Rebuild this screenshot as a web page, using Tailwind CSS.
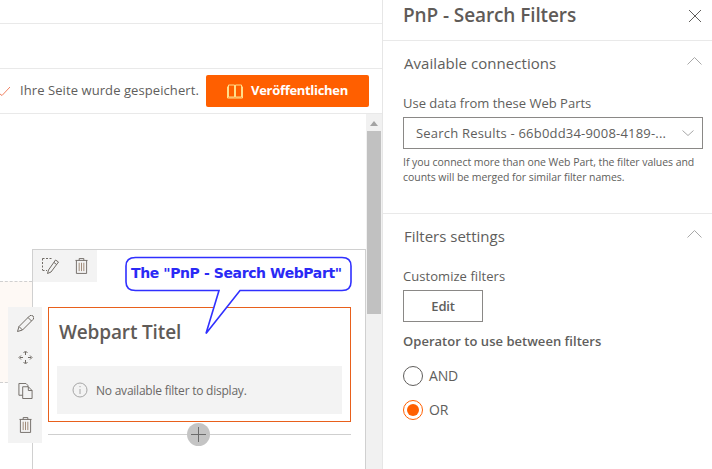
<!DOCTYPE html>
<html lang="en">
<head>
  <meta charset="UTF-8" />
  <title>PnP - Search Filters</title>
  <script src="https://cdn.jsdelivr.net/npm/@tailwindcss/browser@4"></script>
</head>
<body class="bg-white w-[712px] h-[469px] overflow-hidden font-['Open_Sans',sans-serif] text-[#605e5c]">
  <div class="flex h-[469px]">
    <!-- page editor -->
    <div class="relative w-[383px] h-[469px] border-r border-[#e6e6e6] flex flex-col">
      <div class="h-[24px] shrink-0 border-b border-[#e9e9e9]"></div>
      <div class="h-[45px] shrink-0 border-b border-[#e9e9e9]"></div>
      <div class="h-[45px] shrink-0 border-b border-[#e9e9e9] flex items-center pr-[13px]">
        <svg class="w-[10px] h-[10px] shrink-0" viewBox="0 0 10 10" fill="none" stroke="#f08060" stroke-width="1"><path d="M0 8 L2 9.5 L10 1"/></svg>
        <span class="ml-[10px] text-[13px] tracking-[0.08px] text-[#605e5c] whitespace-nowrap">Ihre Seite wurde gespeichert.</span>
        <button class="ml-auto w-[163px] h-[32px] rounded-[2px] bg-[#ff5f00] text-white flex items-center justify-center gap-[8px] text-[13px] font-bold tracking-[-0.3px]">
          <svg class="w-[16px] h-[15px]" viewBox="0 0 16 15" fill="none" stroke="#ffdf8a" stroke-width="1"><path d="M1.5 1 H7.5 V13 H1.5 Z M8.5 1 H14.5 V13 H8.5 Z M0.5 2.5 V14 H15.5 V2.5"/></svg>
          Veröffentlichen
        </button>
      </div>
      <div class="flex flex-1 min-h-0">
        <div class="w-[366px] pt-[135px]">
          <div class="relative h-[220px] flex">
            <div class="w-[32px] h-[102px] mt-[32px] bg-[#fef9f5] border-y border-dashed border-[#d0d0d0]"></div>
            <div class="w-[334px] h-[240px] border-l border-t border-r border-[#d0d0d0] pl-[15px] pr-[14px] pt-[57px]">
              <div class="w-[303px] h-[115px] border border-[#e8601c] pt-[11px] px-[8px]">
                <h2 class="ml-[2px] text-[19px] leading-[26px] font-semibold tracking-[-0.15px] text-[#5f5b58]">Webpart Titel</h2>
                <div class="mt-[21px] h-[48px] bg-[#f3f3f3] flex items-center pl-[15px] gap-[8px]">
                  <svg class="w-[16px] h-[16px]" viewBox="0 0 16 16" fill="none" stroke="#a6a6a6"><circle cx="8" cy="8" r="7"/><path d="M8 7 V12 M8 4 V5.2"/></svg>
                  <span class="pt-[2px] text-[12px] tracking-[-0.23px] text-[#6a6866]">No available filter to display.</span>
                </div>
              </div>
              <div class="relative mt-[12px] h-px w-[303px] bg-[#cfcfcf]">
                <div class="absolute left-[139px] -top-[11px] w-[23px] h-[23px] rounded-full bg-[#c4c4c4] flex items-center justify-center">
                  <svg class="w-[15px] h-[15px]" viewBox="0 0 15 15" stroke="#6b6b6b"><path d="M7.5 0 V15 M0 7.5 H15"/></svg>
                </div>
              </div>
            </div>
          </div>
        </div>
        <!-- scrollbar -->
        <div class="w-[16px] bg-[#f1f1f1] flex flex-col items-center">
          <div class="h-[17px] w-full flex items-center justify-center pt-[2px]">
            <svg class="w-[8px] h-[5px]" viewBox="0 0 8 5"><path d="M0 5 L4 0 L8 5 Z" fill="#a3a3a3"/></svg>
          </div>
          <div class="w-[14px] h-[183px] bg-[#c1c1c1]"></div>
        </div>
      </div>

      <!-- section toolbar -->
      <div class="absolute left-[33px] top-[250px] w-[64px] h-[32px] bg-[#f3f3f3] flex items-center pl-[9px] gap-[16px]">
        <svg class="w-[17px] h-[16px]" viewBox="0 0 17 16" fill="none" stroke="#6f6a64"><path d="M0.5 0.5 H11 M0.5 0.5 V12 M0.5 12.5 H5" stroke-dasharray="2 1.5"/><path d="M5.5 15.5 L6.5 12 L13.5 2 L16.5 4 L9 14 Z M12 4.5 L14.5 6.5"/></svg>
        <svg class="w-[13px] h-[16px]" viewBox="0 0 14 17" fill="none" stroke="#6f6a64"><path d="M0.5 2.5 H13.5 M4.5 2.5 V0.5 H9.5 V2.5 M1.5 2.5 V16.5 H12.5 V2.5"/><path stroke="#9a8470" d="M4.5 5 V14 M7 5 V14 M9.5 5 V14"/></svg>
      </div>

      <!-- web part toolbar -->
      <div class="absolute left-[8px] top-[307px] w-[34px] h-[136px] bg-[#f3f3f3] flex flex-col items-center pt-[8px] gap-[18px]">
        <svg class="w-[17px] h-[17px]" viewBox="0 0 17 17" fill="none" stroke="#6f6a64"><path d="M0.5 16.5 L2 11.5 L12.5 1 A1.5 1.5 0 0 1 16 4.5 L5.5 15 Z M2 11.5 L5.5 15 M11 2.5 L14.5 6"/></svg>
        <svg class="w-[15px] h-[15px]" viewBox="0 0 15 15" fill="none" stroke="#6f6a64"><path d="M7.5 2 V5 M7.5 10 V13 M2 7.5 H5 M10 7.5 H13 M5.5 3 L7.5 1 L9.5 3 M5.5 12 L7.5 14 L9.5 12 M3 5.5 L1 7.5 L3 9.5 M12 5.5 L14 7.5 L12 9.5"/></svg>
        <svg class="w-[15px] h-[16px]" viewBox="0 0 15 17" fill="none" stroke="#6f6a64"><path d="M4.5 13 H0.5 V0.5 H8 L10 2.5 V4"/><path d="M4.5 4 H10.5 L14.5 8 V16.5 H4.5 Z M10.5 4 V8 H14.5"/></svg>
        <svg class="w-[13px] h-[16px]" viewBox="0 0 14 17" fill="none" stroke="#6f6a64"><path d="M0.5 2.5 H13.5 M4.5 2.5 V0.5 H9.5 V2.5 M1.5 2.5 V16.5 H12.5 V2.5"/><path stroke="#9a8470" d="M4.5 5 V14 M7 5 V14 M9.5 5 V14"/></svg>
      </div>

      <!-- callout annotation -->
      <svg class="absolute left-[120px] top-[250px] w-[240px] h-[90px]" viewBox="0 0 240 90" fill="white" stroke="#3030ff" stroke-width="1.6">
        <path d="M15.5 7.5 H222 Q231 7.5 231 16 V32 Q231 40.5 222 40.5 H120 L86 83.5 L99 40.5 H15.5 Q6 40.5 6 32 V16 Q6 7.5 15.5 7.5 Z"/>
      </svg>
      <div class="absolute left-[131px] top-[262px] text-[14px] leading-[22px] font-bold text-[#2a2af5] font-['DejaVu_Sans',sans-serif] tracking-[-0.4px] whitespace-nowrap">The "PnP - Search WebPart"</div>
    </div>

    <!-- property pane -->
    <div class="w-[329px] h-[469px] flex flex-col">
      <div class="h-[41px] shrink-0 border-b border-[#e9e9e9] flex items-center justify-between pl-[20px] pr-[11px] pb-[9px]">
        <h1 class="text-[19px] font-semibold tracking-[-0.1px] text-[#5f5b58]">PnP - Search Filters</h1>
        <svg class="w-[12px] h-[12px]" viewBox="0 0 12 12" stroke="#605e5c"><path d="M0 0 L12 12 M12 0 L0 12"/></svg>
      </div>
      <div class="h-[173px] shrink-0 border-b border-[#e9e9e9] pl-[20px] pr-[9px] pt-[11px]">
        <div class="flex items-center justify-between pr-[1px] h-[22px]">
          <span class="ml-[1px] text-[15px] tracking-[0.05px]">Available connections</span>
          <svg class="w-[15px] h-[8px] mb-[4px]" viewBox="0 0 15 8" fill="none" stroke="#a8a8a8"><path d="M0.5 7.5 L7.5 0.5 L14.5 7.5"/></svg>
        </div>
        <p class="mt-[20px] text-[13px] leading-[18px]">Use data from these Web Parts</p>
        <div class="mt-[5px] w-[300px] h-[32px] border border-[#8a8886] flex items-center justify-between pl-[12px] pr-[8px]">
          <span class="pt-[1px] text-[13px] tracking-[0.2px] whitespace-nowrap">Search Results - 66b0dd34-9008-4189-...</span>
          <svg class="w-[12px] h-[6px]" viewBox="0 0 12 6" fill="none" stroke="#a8a8a8"><path d="M0.5 0.5 L6 5.5 L11.5 0.5"/></svg>
        </div>
        <p class="mt-[6px] text-[10.5px] leading-[15px] tracking-[-0.05px]">If you connect more than one Web Part, the filter values and<br />counts will be merged for similar filter names.</p>
      </div>
      <div class="pl-[20px] pr-[9px] pt-[11px]">
        <div class="flex items-center justify-between pr-[1px] h-[22px]">
          <span class="ml-[1px] text-[15px]">Filters settings</span>
          <svg class="w-[15px] h-[8px] mb-[4px]" viewBox="0 0 15 8" fill="none" stroke="#a8a8a8"><path d="M0.5 7.5 L7.5 0.5 L14.5 7.5"/></svg>
        </div>
        <p class="mt-[20px] text-[13px] leading-[18px] tracking-[0.05px]">Customize filters</p>
        <button class="block mt-[5px] w-[80px] h-[32px] border border-[#8a8886] pt-[2px] text-[13px] font-semibold tracking-[-0.2px]">Edit</button>
        <p class="mt-[10px] text-[13px] leading-[18px] font-semibold tracking-[0.03px]">Operator to use between filters</p>
        <div class="mt-[16px] flex items-center gap-[6px] h-[20px]">
          <span class="w-[20px] h-[20px] rounded-full border border-[#605e5c]"></span>
          <span class="pb-[2px] text-[14px] tracking-[-0.2px]">AND</span>
        </div>
        <div class="mt-[14px] flex items-center gap-[6px] h-[20px]">
          <span class="w-[20px] h-[20px] rounded-full border border-[#ff5f00] flex items-center justify-center">
            <span class="w-[12px] h-[12px] rounded-full bg-[#ff5f00]"></span>
          </span>
          <span class="pb-[2px] text-[14px] tracking-[-0.2px]">OR</span>
        </div>
      </div>
    </div>
  </div>
</body>
</html>
